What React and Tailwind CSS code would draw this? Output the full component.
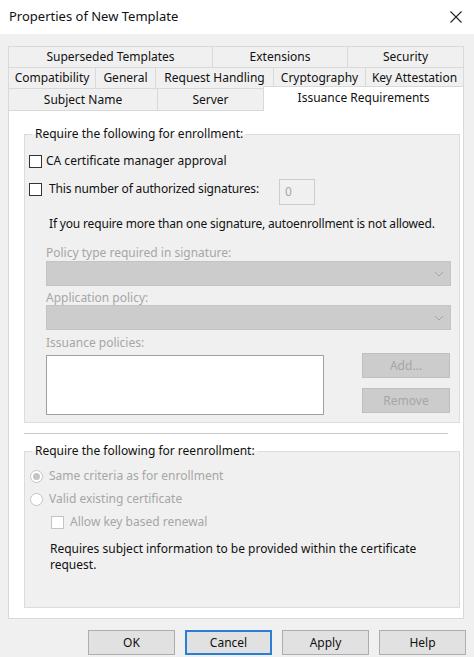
const font = { fontFamily: '"Noto Sans", "Open Sans", sans-serif' };

const Tab = ({ label, w, last }) => (
  <div
    className={
      "h-full flex items-center justify-center border-t border-l border-[#d9d9d9] bg-[#f0f0f0] text-[12px] text-[#111] " +
      (last ? "border-r" : "")
    }
    style={{ width: w }}
  >
    {label}
  </div>
);

const Checkbox = ({ disabled }) => (
  <div
    className={
      "w-[13px] h-[13px] shrink-0 bg-white border " +
      (disabled ? "border-[#c4c4c4]" : "border-[#333]")
    }
  />
);

const Chevron = () => (
  <svg width="10" height="6" viewBox="0 0 10 6" className="mr-[6px]">
    <path d="M1 1l4 4 4-4" fill="none" stroke="#a6a6a6" strokeWidth="1" />
  </svg>
);

const Dropdown = () => (
  <div className="h-[25px] bg-[#cccccc] border border-[#c4c4c4] flex items-center justify-end">
    <Chevron />
  </div>
);

const Radio = ({ checked }) => (
  <div className="w-[13px] h-[13px] shrink-0 rounded-full border border-[#c4c4c4] bg-white flex items-center justify-center">
    {checked && <div className="w-[7px] h-[7px] rounded-full bg-[#c4c4c4]" />}
  </div>
);

const DialogButton = ({ label, focused }) => (
  <button
    className={
      "w-[87px] h-[25px] bg-[#e1e1e1] text-[12px] text-[#111] flex items-center justify-center " +
      (focused ? "border-2 border-[#2a7fd4]" : "border border-[#adadad]")
    }
  >
    {label}
  </button>
);

export default function App() {
  return (
    <div className="w-[474px] h-[657px] bg-[#f0f0f0] flex flex-col overflow-hidden" style={font}>
      {/* title bar */}
      <div className="h-[34px] bg-white flex items-center justify-between pl-[9px] pr-[12px] shrink-0">
        <span className="text-[13px] text-[#111]">Properties of New Template</span>
        <svg width="12" height="12" viewBox="0 0 12 12">
          <path d="M0.5 0.5l11 11M11.5 0.5l-11 11" stroke="#222" strokeWidth="1.1" />
        </svg>
      </div>

      {/* tabs */}
      <div className="ml-[8px] w-[456px] mt-[12px] flex flex-col">
        <div className="h-[21px] flex">
          <Tab label="Superseded Templates" w={204} />
          <Tab label="Extensions" w={135} />
          <Tab label="Security" w={117} last />
        </div>
        <div className="h-[21px] flex">
          <Tab label="Compatibility" w={87} />
          <Tab label="General" w={60} />
          <Tab label="Request Handling" w={118} />
          <Tab label="Cryptography" w={92} />
          <Tab label="Key Attestation" w={99} last />
        </div>
        <div className="h-[22px] flex items-end">
          <Tab label="Subject Name" w={149} />
          <Tab label="Server" w={106} />
          <div className="relative z-10 w-[201px] h-[25px] -mb-px bg-white border-t border-l border-r border-[#d9d9d9] flex items-center justify-center text-[12px] text-[#111] pb-[2px]">
            Issuance Requirements
          </div>
        </div>
      </div>

      {/* panel */}
      <div className="ml-[8px] w-[456px] h-[509px] bg-white border border-[#d9d9d9] pt-[16px] pb-[10px] pl-[15px] pr-[3px] flex flex-col">
        <fieldset className="border border-[#dcdcdc] bg-[#f0f0f0] pl-[4px] pr-[8px] pb-[7px] text-[12px]">
          <legend className="ml-[3px] px-[3px] leading-[14px] text-[#111]">
            Require the following for enrollment:
          </legend>
          <div className="mt-[10px] h-[20px] flex items-center gap-[4px] text-[#111]">
            <Checkbox />
            <span>CA certificate manager approval</span>
          </div>
          <div className="mt-[8px] h-[26px] flex items-start text-[#111]">
            <div className="mt-[4px]">
              <Checkbox />
            </div>
            <span className="ml-[7px] leading-[20px] tracking-[-0.15px]">This number of authorized signatures:</span>
            <div className="ml-[20px] w-[36px] h-[26px] border border-[#cccccc] bg-[#f0f0f0] text-[#a6a6a6] flex items-center pl-[5px]">
              0
            </div>
          </div>
          <p className="mt-[11px] ml-[20px] leading-[16px] text-[#111] tracking-[-0.17px]">
            If you require more than one signature, autoenrollment is not allowed.
          </p>
          <div className="ml-[17px] flex flex-col text-[#a6a6a6]">
            <span className="mt-[14px] leading-[14px]">Policy type required in signature:</span>
            <div className="mt-[1px]">
              <Dropdown />
            </div>
            <span className="mt-[5px] leading-[14px]">Application policy:</span>
            <Dropdown />
            <span className="mt-[6px] leading-[14px]">Issuance policies:</span>
            <div className="mt-[3px] flex items-start">
              <div className="mt-[2px] w-[278px] h-[60px] bg-white border border-[#a0a0a0]" />
              <div className="ml-[38px] flex flex-col gap-[10px]">
                <div className="w-[88px] h-[25px] bg-[#cccccc] border border-[#bfbfbf] flex items-center justify-center">
                  Add...
                </div>
                <div className="w-[88px] h-[25px] bg-[#cccccc] border border-[#bfbfbf] flex items-center justify-center">
                  Remove
                </div>
              </div>
            </div>
          </div>
        </fieldset>

        <div className="mt-[10px] mr-[12px] h-px bg-[#c8c8c8] shrink-0" />

        <fieldset className="mt-[10px] flex-1 border border-[#dcdcdc] bg-[#f0f0f0] pl-[5px] pr-[8px] text-[12px]">
          <legend className="ml-[2px] px-[3px] leading-[14px] text-[#111]">
            Require the following for reenrollment:
          </legend>
          <div className="mt-[8px] h-[20px] flex items-center gap-[6px] text-[#a6a6a6]">
            <Radio checked />
            <span>Same criteria as for enrollment</span>
          </div>
          <div className="mt-[3px] h-[20px] flex items-center gap-[6px] text-[#a6a6a6]">
            <Radio />
            <span>Valid existing certificate</span>
          </div>
          <div className="mt-[3px] ml-[21px] h-[20px] flex items-center gap-[6px] text-[#a6a6a6]">
            <Checkbox disabled />
            <span>Allow key based renewal</span>
          </div>
          <p className="mt-[9px] ml-[20px] leading-[16px] text-[#111] pr-[30px]">
            Requires subject information to be provided within the certificate request.
          </p>
        </fieldset>
      </div>

      {/* buttons */}
      <div className="mt-[11px] flex justify-end gap-[10px] pr-[8px]">
        <DialogButton label="OK" />
        <DialogButton label="Cancel" focused />
        <DialogButton label="Apply" />
        <DialogButton label="Help" />
      </div>
    </div>
  );
}
